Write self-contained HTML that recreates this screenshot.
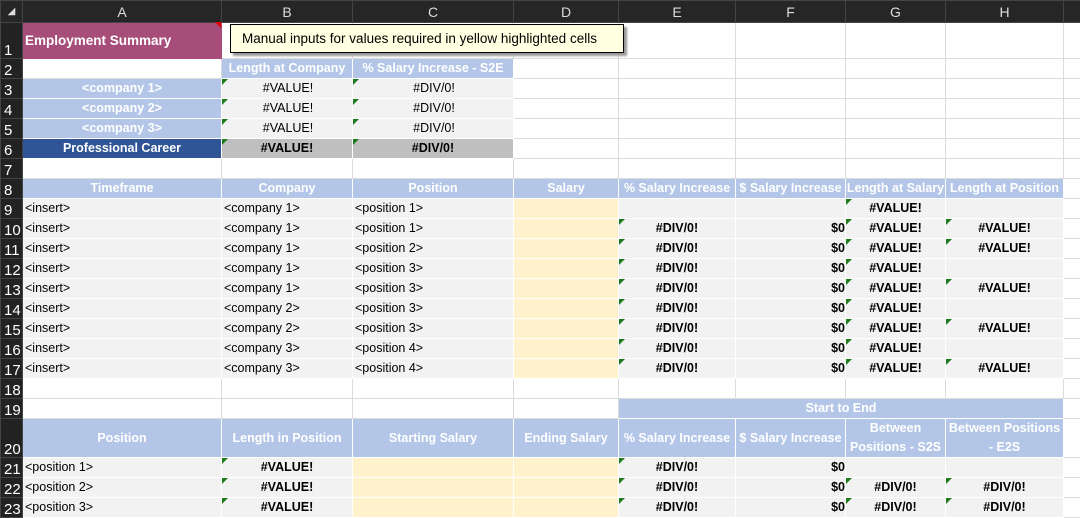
<!DOCTYPE html>
<html><head><style>
body{margin:0;width:1080px;height:515px;overflow:hidden;background:#fff;font-family:"Liberation Sans",Arial,sans-serif;position:relative}
table{border-collapse:collapse;table-layout:fixed;position:absolute;left:0;top:0;width:1083px}
td{border:1px solid #dcdcdc;padding:0;text-indent:2px;font-size:12.5px;white-space:nowrap;overflow:hidden;position:relative;color:#000;line-height:1;box-sizing:border-box}
tr{height:20px}
td.rh{background:#222;color:#fff;font-size:15px;text-align:left;vertical-align:bottom;text-indent:3px;border:1px solid #444}
tr.ch td{background:#262626;color:#ddd;text-align:center;font-size:14px;border:1px solid #444;height:22px;text-indent:0}
.h{background:#b4c6e7;color:#fff;font-weight:bold;text-align:center;border:1px solid #fff;text-indent:0}
.g{background:#f2f2f2;border:1px solid #fff}
.y{background:#fff2cc;border:1px solid #fff}
.b{font-weight:bold;text-align:center;text-indent:0}
.r{text-align:right;font-weight:bold;text-indent:0}
.t::before{content:"";position:absolute;left:0;top:0;border-top:6px solid #1e7b1e;border-right:6px solid transparent}
.tip{position:absolute;left:230px;top:24px;width:394px;height:29px;background:#ffffe1;border:1px solid #000;box-shadow:3px 3px 2px #999;font-size:13.5px;line-height:28px;padding-left:11px;box-sizing:border-box}
</style></head><body>
<table>
<colgroup><col style="width:22px"><col style="width:199px"><col style="width:131px"><col style="width:161px"><col style="width:105px"><col style="width:117px"><col style="width:110px"><col style="width:100px"><col style="width:118px"><col style="width:20px"></colgroup>
<tr class="ch"><td style="font-size:10px">◢</td><td>A</td><td>B</td><td>C</td><td>D</td><td>E</td><td>F</td><td>G</td><td>H</td><td></td></tr>
<tr style="height:36px"><td class="rh">1</td><td style="background:#a64d79;color:#fff;font-weight:bold;font-size:13.5px;border:1px solid #a64d79">Employment Summary</td><td></td><td></td><td></td><td></td><td></td><td></td><td></td><td></td></tr>
<tr><td class="rh">2</td><td></td><td class="h">Length at Company</td><td class="h">% Salary Increase - S2E</td><td></td><td></td><td></td><td></td><td></td><td></td></tr>
<tr><td class="rh">3</td><td class="h">&lt;company 1&gt;</td><td class="g t" style="text-align:center">#VALUE!</td><td class="g t" style="text-align:center">#DIV/0!</td><td></td><td></td><td></td><td></td><td></td><td></td></tr>
<tr><td class="rh">4</td><td class="h">&lt;company 2&gt;</td><td class="g t" style="text-align:center">#VALUE!</td><td class="g t" style="text-align:center">#DIV/0!</td><td></td><td></td><td></td><td></td><td></td><td></td></tr>
<tr><td class="rh">5</td><td class="h">&lt;company 3&gt;</td><td class="g t" style="text-align:center">#VALUE!</td><td class="g t" style="text-align:center">#DIV/0!</td><td></td><td></td><td></td><td></td><td></td><td></td></tr>
<tr><td class="rh">6</td><td class="h" style="background:#2f5597">Professional Career</td><td class="b t" style="background:#bfbfbf;border:1px solid #fff">#VALUE!</td><td class="b t" style="background:#bfbfbf;border:1px solid #fff">#DIV/0!</td><td></td><td></td><td></td><td></td><td></td><td></td></tr>
<tr><td class="rh">7</td><td></td><td></td><td></td><td></td><td></td><td></td><td></td><td></td><td></td></tr>
<tr><td class="rh">8</td><td class="h">Timeframe</td><td class="h">Company</td><td class="h">Position</td><td class="h">Salary</td><td class="h">% Salary Increase</td><td class="h">$ Salary Increase</td><td class="h">Length at Salary</td><td class="h">Length at Position</td><td></td></tr>
<tr><td class="rh">9</td><td class="g">&lt;insert&gt;</td><td class="g">&lt;company 1&gt;</td><td class="g">&lt;position 1&gt;</td><td class="y"></td><td class="g"></td><td class="g"></td><td class="g b t">#VALUE!</td><td class="g"></td><td></td></tr>
<tr><td class="rh">10</td><td class="g">&lt;insert&gt;</td><td class="g">&lt;company 1&gt;</td><td class="g">&lt;position 1&gt;</td><td class="y"></td><td class="g b t">#DIV/0!</td><td class="g r">$0</td><td class="g b t">#VALUE!</td><td class="g b t">#VALUE!</td><td></td></tr>
<tr><td class="rh">11</td><td class="g">&lt;insert&gt;</td><td class="g">&lt;company 1&gt;</td><td class="g">&lt;position 2&gt;</td><td class="y"></td><td class="g b t">#DIV/0!</td><td class="g r">$0</td><td class="g b t">#VALUE!</td><td class="g b t">#VALUE!</td><td></td></tr>
<tr><td class="rh">12</td><td class="g">&lt;insert&gt;</td><td class="g">&lt;company 1&gt;</td><td class="g">&lt;position 3&gt;</td><td class="y"></td><td class="g b t">#DIV/0!</td><td class="g r">$0</td><td class="g b t">#VALUE!</td><td class="g"></td><td></td></tr>
<tr><td class="rh">13</td><td class="g">&lt;insert&gt;</td><td class="g">&lt;company 1&gt;</td><td class="g">&lt;position 3&gt;</td><td class="y"></td><td class="g b t">#DIV/0!</td><td class="g r">$0</td><td class="g b t">#VALUE!</td><td class="g b t">#VALUE!</td><td></td></tr>
<tr><td class="rh">14</td><td class="g">&lt;insert&gt;</td><td class="g">&lt;company 2&gt;</td><td class="g">&lt;position 3&gt;</td><td class="y"></td><td class="g b t">#DIV/0!</td><td class="g r">$0</td><td class="g b t">#VALUE!</td><td class="g"></td><td></td></tr>
<tr><td class="rh">15</td><td class="g">&lt;insert&gt;</td><td class="g">&lt;company 2&gt;</td><td class="g">&lt;position 3&gt;</td><td class="y"></td><td class="g b t">#DIV/0!</td><td class="g r">$0</td><td class="g b t">#VALUE!</td><td class="g b t">#VALUE!</td><td></td></tr>
<tr><td class="rh">16</td><td class="g">&lt;insert&gt;</td><td class="g">&lt;company 3&gt;</td><td class="g">&lt;position 4&gt;</td><td class="y"></td><td class="g b t">#DIV/0!</td><td class="g r">$0</td><td class="g b t">#VALUE!</td><td class="g"></td><td></td></tr>
<tr><td class="rh">17</td><td class="g">&lt;insert&gt;</td><td class="g">&lt;company 3&gt;</td><td class="g">&lt;position 4&gt;</td><td class="y"></td><td class="g b t">#DIV/0!</td><td class="g r">$0</td><td class="g b t">#VALUE!</td><td class="g b t">#VALUE!</td><td></td></tr>
<tr><td class="rh">18</td><td></td><td></td><td></td><td></td><td></td><td></td><td></td><td></td><td></td></tr>
<tr><td class="rh">19</td><td></td><td></td><td></td><td></td><td class="h" colspan="4">Start to End</td><td></td></tr>
<tr style="height:36px"><td class="rh">20</td><td class="h">Position</td><td class="h">Length in Position</td><td class="h">Starting Salary</td><td class="h">Ending Salary</td><td class="h">% Salary Increase</td><td class="h">$ Salary Increase</td><td class="h" style="white-space:normal;line-height:19px">Between Positions - S2S</td><td class="h" style="white-space:normal;line-height:19px">Between Positions - E2S</td><td></td></tr>
<tr><td class="rh">21</td><td class="g">&lt;position 1&gt;</td><td class="g b t">#VALUE!</td><td class="y"></td><td class="y"></td><td class="g b t">#DIV/0!</td><td class="g r">$0</td><td class="g"></td><td class="g"></td><td></td></tr>
<tr><td class="rh">22</td><td class="g">&lt;position 2&gt;</td><td class="g b t">#VALUE!</td><td class="y"></td><td class="y"></td><td class="g b t">#DIV/0!</td><td class="g r">$0</td><td class="g b t">#DIV/0!</td><td class="g b t">#DIV/0!</td><td></td></tr>
<tr><td class="rh">23</td><td class="g">&lt;position 3&gt;</td><td class="g b t">#VALUE!</td><td class="y"></td><td class="y"></td><td class="g b t">#DIV/0!</td><td class="g r">$0</td><td class="g b t">#DIV/0!</td><td class="g b t">#DIV/0!</td><td></td></tr>
</table>
<div style="position:absolute;left:215px;top:22px;border-top:6px solid #d00;border-left:6px solid transparent"></div>
<div class="tip">Manual inputs for values required in yellow highlighted cells</div>
</body></html>
